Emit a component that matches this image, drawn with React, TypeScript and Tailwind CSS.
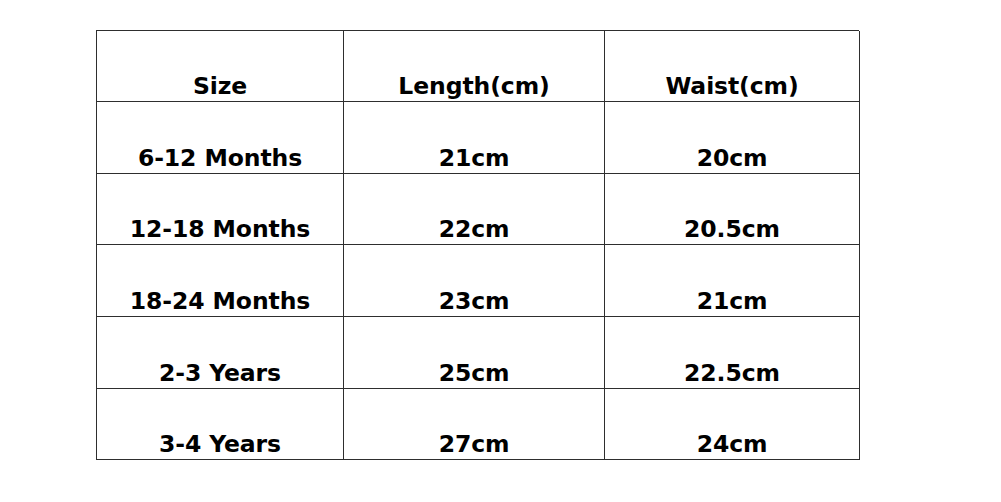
const rows = [
  ["Size", "Length(cm)", "Waist(cm)"],
  ["6-12 Months", "21cm", "20cm"],
  ["12-18 Months", "22cm", "20.5cm"],
  ["18-24 Months", "23cm", "21cm"],
  ["2-3 Years", "25cm", "22.5cm"],
  ["3-4 Years", "27cm", "24cm"],
];

const heights = ["h-[71px]", "h-[72px]", "h-[71px]", "h-[72px]", "h-[72px]", "h-[71px]"];

export default function App() {
  return (
    <div className="w-[1001px] h-[502px] bg-white pt-[30px] pl-[96px] font-['DejaVu_Sans',sans-serif]">
      <div className="w-[763px] border-t border-l border-[#2e2e2e]">
        {rows.map((row, i) => (
          <div key={i} className={`grid grid-cols-[247px_261px_255px] ${heights[i]}`}>
            {row.map((cell, j) => (
              <div
                key={j}
                className="flex items-end justify-center border-r border-b border-[#2e2e2e] pb-[3px] text-[23.5px] leading-none font-bold text-black tracking-[-0.1px]"
              >
                {cell}
              </div>
            ))}
          </div>
        ))}
      </div>
    </div>
  );
}
